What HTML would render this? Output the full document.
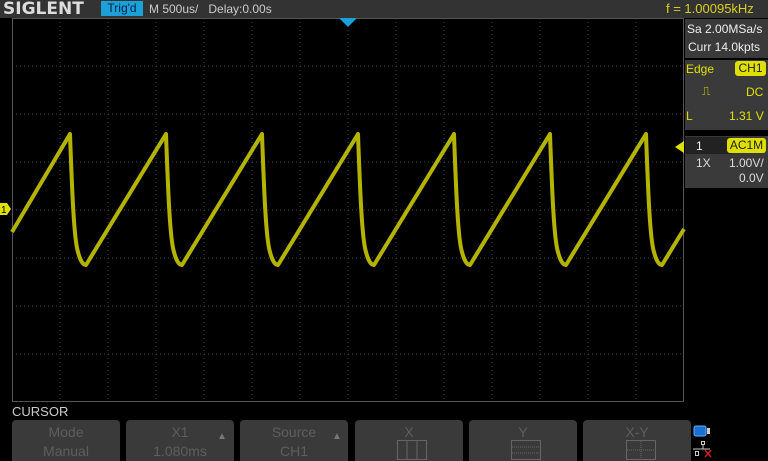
<html><head><style>
body{margin:0;width:768px;height:461px;background:#000;position:relative;overflow:hidden;font-family:"Liberation Sans",sans-serif}
.a{position:absolute}
.top{left:0;top:0;width:768px;height:18px;background:#333}
.rp{background:#3a3a3a}
.t{color:#ddd;font-size:12px;white-space:nowrap}
.y{color:#e0e000}
.btn{top:420px;height:41px;width:108px;background:#3a3a3a;border-radius:4px 4px 0 0;color:#5e5e5e;font-size:14px;text-align:center;line-height:19px;padding-top:3px;box-sizing:border-box}
</style></head><body>
<div class="a top"></div>
<div class="a" style="left:3px;top:-1px;font-size:17px;font-weight:bold;color:#ddd;font-family:'DejaVu Sans',sans-serif">SIGLENT</div>
<div class="a t" style="left:101px;top:1px;width:42px;height:15px;background:#1ba0d8;color:#024;text-align:center;line-height:15px">Trig'd</div>
<div class="a t" style="left:149px;top:2px;color:#ccc">M 500us/&nbsp;&nbsp; Delay:0.00s</div>
<div class="a t y" style="left:666px;top:1px;font-size:13px;color:#d8d020">f = 1.00095kHz</div>
<svg class="a" style="left:0;top:0" width="768" height="461">
<g stroke="#444" stroke-width="1" stroke-dasharray="1,3" fill="none">
<path d="M60 18V402M108 18V402M156 18V402M204 18V402M252 18V402M300 18V402M348 18V402M396 18V402M444 18V402M492 18V402M540 18V402M588 18V402M636 18V402"/>
<path d="M12 66H684M12 114H684M12 162H684M12 210H684M12 258H684M12 306H684M12 354H684"/>
</g>
<rect x="12.5" y="18.5" width="671" height="383" fill="none" stroke="#555"/>
<polygon points="339,18 357,18 348,27" fill="#1ba0d8"/>
<g id="w" fill="none" stroke="#b4b400" stroke-width="4" stroke-linejoin="round">
<path d="M12 232 L70 134 C72 190 74 240 78 252 C80 260 83 265 86 265 L166 134 C168 190 170 240 174 252 C176 260 179 265 182 265 L262 134 C264 190 266 240 270 252 C272 260 275 265 278 265 L358 134 C360 190 362 240 366 252 C368 260 371 265 374 265 L454 134 C456 190 458 240 462 252 C464 260 467 265 470 265 L550 134 C552 190 554 240 558 252 C560 260 563 265 566 265 L646 134 C648 190 650 240 654 252 C656 260 659 265 662 265 L684 229"/>
</g>
<polygon points="0,203 7,203 11,209 7,215 0,215" fill="#e0e000"/>
<text x="1" y="213" font-size="10" fill="#000" font-family="Liberation Sans">1</text>
<polygon points="675,147 684,141 684,153" fill="#e0e000"/>
</svg>
<div class="a rp" style="left:685px;top:19px;width:83px;height:39px"></div>
<div class="a t" style="left:687px;top:22px;color:#eee">Sa 2.00MSa/s</div>
<div class="a t" style="left:688px;top:40px;color:#eee">Curr 14.0kpts</div>
<div class="a rp" style="left:685px;top:60px;width:83px;height:70px"></div>
<div class="a t y" style="left:686px;top:62px">Edge</div>
<div class="a t" style="left:735px;top:61px;width:31px;height:15px;background:#e0e000;color:#222;text-align:center;border-radius:3px;line-height:15px">CH1</div>
<div class="a t y" style="left:702px;top:84px">⎍</div>
<div class="a t y" style="left:746px;top:85px">DC</div>
<div class="a t y" style="left:686px;top:109px">L</div>
<div class="a t y" style="left:729px;top:109px">1.31 V</div>
<div class="a rp" style="left:685px;top:136px;width:83px;height:52px"></div>
<div class="a" style="left:685px;top:137px;width:47px;height:17px;background:#222"></div>
<div class="a t" style="left:696px;top:139px;color:#eee">1</div>
<div class="a t" style="left:727px;top:138px;width:39px;height:15px;background:#e0e000;color:#222;text-align:center;border-radius:3px;line-height:15px">AC1M</div>
<div class="a t" style="left:696px;top:156px">1X</div>
<div class="a t" style="left:729px;top:156px">1.00V/</div>
<div class="a t" style="left:739px;top:171px">0.0V</div>
<div class="a t" style="left:12px;top:404px;color:#ccc;font-size:13px">CURSOR</div>
<div class="a btn" style="left:12px">Mode<br>Manual</div>
<div class="a btn" style="left:126px">X1<br>1.080ms</div>
<div class="a btn" style="left:240px">Source<br>CH1</div>
<div class="a btn" style="left:355px">X</div>
<div class="a btn" style="left:469px">Y</div>
<div class="a btn" style="left:583px">X-Y</div>
<div class="a" style="left:217px;top:431px;color:#777;font-size:10px">▲</div>
<div class="a" style="left:332px;top:431px;color:#777;font-size:10px">▲</div>
<svg class="a" style="left:0;top:0" width="768" height="461">
<g stroke="#666" fill="none"><rect x="397.5" y="440.5" width="29" height="19"/><path d="M407 441V459M417 441V459"/>
<rect x="511.5" y="440.5" width="29" height="19"/><path d="M512 447H540M512 453H540" stroke-dasharray="1,1"/>
<rect x="626.5" y="440.5" width="29" height="19"/><path d="M641 441V459M627 450H655" stroke-dasharray="1,1"/></g>
<rect x="694" y="426" width="12" height="10" rx="2" fill="#1a70d0" stroke="#6af"/>
<rect x="707" y="428" width="3" height="6" fill="#ccc"/>
<g stroke="#ccc" fill="none"><rect x="701.5" y="441.5" width="3" height="3"/><path d="M703 445V449M693 449H710"/><rect x="695.5" y="451.5" width="3" height="4"/></g>
<path d="M705 450L711 457M711 450L705 457" stroke="#d02020" stroke-width="1.5"/>
</svg>
</body></html>
